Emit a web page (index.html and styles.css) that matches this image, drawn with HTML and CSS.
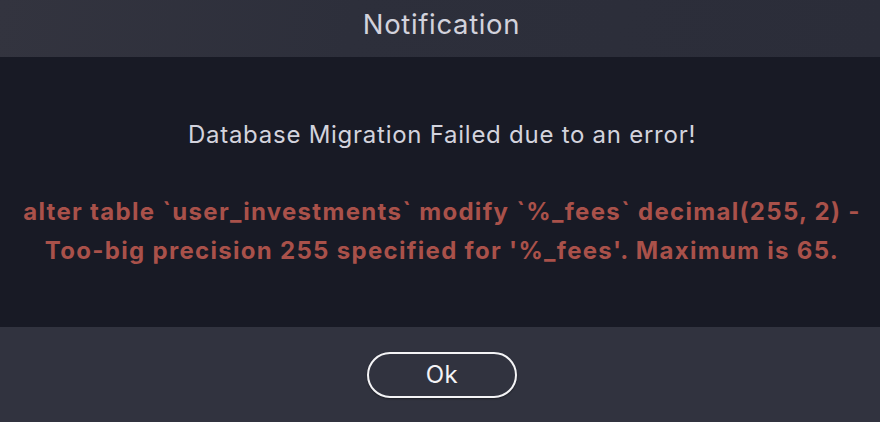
FILE: index.html
```html
<!DOCTYPE html>
<html>
<head>
<meta charset="utf-8">
<link rel="stylesheet" href="styles.css">
</head>
<body>
<div class="dialog">
  <header class="titlebar"><h1 class="title">Notification</h1></header>
  <main class="content">
    <p class="message">Database Migration Failed due to an error!</p>
    <p class="error">alter table `user_investments` modify `%_fees` decimal(255, 2) -<br>Too-big precision 255 specified for '%_fees'. Maximum is 65.</p>
  </main>
  <footer class="actions"><button class="ok-btn">Ok</button></footer>
</div>
</body>
</html>
```
FILE: styles.css
```css
html, body {
  margin: 0;
  padding: 0;
  width: 880px;
  height: 422px;
  overflow: hidden;
  background: #191a25;
}
.dialog {
  display: flex;
  flex-direction: column;
  height: 422px;
  font-family: Inter, "Noto Sans", sans-serif;
}
.titlebar {
  height: 57px;
  box-sizing: border-box;
  padding: 11px 0 0 3px;
  display: flex;
  align-items: flex-start;
  justify-content: center;
  background: linear-gradient(100deg, #33343f 0%, #2d2f3b 40%, #2b2d39 100%);
}
.title {
  margin: 0;
  font-size: 27.5px;
  font-weight: 400;
  letter-spacing: 0.65px;
  color: #d2d2dc;
  line-height: 1;
}
.content {
  height: 270px;
  box-sizing: border-box;
  padding: 63px 0 0 4px;
  background: #181a25;
  text-align: center;
}
.message {
  margin: 0;
  font-size: 24px;
  letter-spacing: 0.74px;
  color: #d3d3dd;
  line-height: normal;
}
.error {
  margin: 44px 0 0;
  font-size: 24px;
  font-weight: 700;
  letter-spacing: 1.3px;
  line-height: 38.5px;
  color: #a9514a;
}
.actions {
  flex: 1;
  display: flex;
  align-items: center;
  justify-content: center;
  padding-left: 4px;
  background: #31333f;
}
.ok-btn {
  width: 150px;
  height: 46px;
  border: 2px solid #f4f4f6;
  border-radius: 23px;
  background: transparent;
  color: #f4f4f6;
  font-family: Inter, "Noto Sans", sans-serif;
  font-size: 24px;
  font-weight: 400;
  letter-spacing: 0.6px;
  padding: 0;
  box-shadow: 0 1px 2px rgba(0,0,0,0.4);
}
```
